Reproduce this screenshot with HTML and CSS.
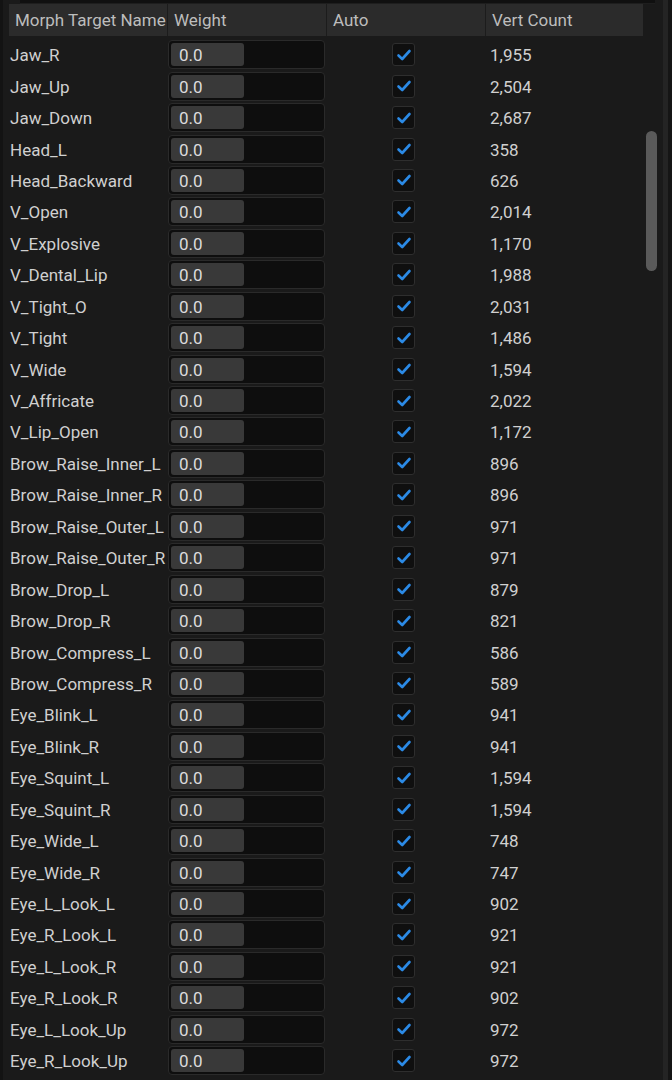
FILE: index.html
```html
<!DOCTYPE html>
<html lang="en">
<head>
  <meta charset="UTF-8" />
  <title>Morph Target Preview</title>
  <link rel="stylesheet" href="styles.css">
</head>
<body>
<div class="panel">
  <div class="gutter"></div>
  <div class="table">
    <div class="search-edge"></div>
    <div class="head">
      <div class="head-cell">Morph Target Name</div>
      <div class="head-cell">Weight</div>
      <div class="head-cell">Auto</div>
      <div class="head-cell">Vert Count</div>
    </div>
    <div class="rows" id="rows"></div>
  </div>
  <div class="scroll">
    <div class="thumb"></div>
  </div>
  <div class="track-line"></div>
  <div class="edge"></div>
</div>
<script>
  const targets = [
    ['Jaw_R', '1,955'], ['Jaw_Up', '2,504'], ['Jaw_Down', '2,687'], ['Head_L', '358'],
    ['Head_Backward', '626'], ['V_Open', '2,014'], ['V_Explosive', '1,170'], ['V_Dental_Lip', '1,988'],
    ['V_Tight_O', '2,031'], ['V_Tight', '1,486'], ['V_Wide', '1,594'], ['V_Affricate', '2,022'],
    ['V_Lip_Open', '1,172'], ['Brow_Raise_Inner_L', '896'], ['Brow_Raise_Inner_R', '896'],
    ['Brow_Raise_Outer_L', '971'], ['Brow_Raise_Outer_R', '971'], ['Brow_Drop_L', '879'],
    ['Brow_Drop_R', '821'], ['Brow_Compress_L', '586'], ['Brow_Compress_R', '589'],
    ['Eye_Blink_L', '941'], ['Eye_Blink_R', '941'], ['Eye_Squint_L', '1,594'], ['Eye_Squint_R', '1,594'],
    ['Eye_Wide_L', '748'], ['Eye_Wide_R', '747'], ['Eye_L_Look_L', '902'], ['Eye_R_Look_L', '921'],
    ['Eye_L_Look_R', '921'], ['Eye_R_Look_R', '902'], ['Eye_L_Look_Up', '972'], ['Eye_R_Look_Up', '972']
  ];

  const check = '<svg viewBox="0 0 16 16" width="16" height="16"><polyline points="2.5,8.5 6.2,12 13.5,4" fill="none" stroke="#2b8ae6" stroke-width="2.6" stroke-linecap="round" stroke-linejoin="round"/></svg>';

  const rows = document.getElementById('rows');
  rows.innerHTML = targets.map(([name, count]) => `
    <div class="row">
      <div class="name">${name}</div>
      <div class="weight"><div class="slider"><span class="fill">0.0</span></div></div>
      <div class="auto"><span class="checkbox">${check}</span></div>
      <div class="count">${count}</div>
    </div>`).join('');
</script>
</body>
</html>
```

FILE: styles.css
```css
html, body {
  margin: 0;
  padding: 0;
  height: 1080px;
  overflow: hidden;
  background: #1a1a1a;
  font-family: Roboto, 'Liberation Sans', sans-serif;
  font-size: 17px;
  color: #d0d0d0;
}
.panel {
  display: flex;
  height: 1080px;
}
.gutter {
  width: 9px;
  flex: none;
  background: linear-gradient(to right, #131313 0, #131313 3px, #1a1a1a 3px);
}
.table {
  width: 634px;
  flex: none;
}
.search-edge {
  height: 4px;
  margin-left: 11px;
  margin-right: -12px;
  background: #101010;
  border-bottom: 1px solid #1e1e1e;
  box-sizing: border-box;
}
.head {
  display: grid;
  grid-template-columns: 158px 158px 158px 157px;
  column-gap: 1px;
  background: #1c1c1c;
  height: 32px;
}
.head-cell {
  background: #2b2b2b;
  color: #bdbdbd;
  padding: 1px 4px 0 6px;
  line-height: 31px;
  white-space: nowrap;
  overflow: hidden;
}
.rows {
  padding-top: 3px;
}
.row {
  display: grid;
  grid-template-columns: 158px 158px 158px 157px;
  column-gap: 1px;
  height: 31.44px;
  align-items: center;
}
.name {
  padding: 1px 0 0 1px;
  white-space: nowrap;
  overflow: hidden;
}
.slider {
  width: 157px;
  height: 29px;
  box-sizing: border-box;
  padding: 2px;
  background: #0e0e0e;
  border: 1px solid #2a2a2a;
  border-radius: 4px;
}
.fill {
  display: block;
  width: 73px;
  height: 23px;
  line-height: 24px;
  box-sizing: border-box;
  padding-left: 8px;
  background: #393939;
  border-radius: 3px;
  color: #dcdcdc;
}
.auto {
  display: flex;
  justify-content: center;
  padding-right: 5px;
}
.checkbox {
  width: 23px;
  height: 23px;
  box-sizing: border-box;
  border: 1px solid #2e2e2e;
  border-radius: 3px;
  background: #0f0f0f;
  display: flex;
  align-items: center;
  justify-content: center;
}
.count {
  padding: 1px 0 0 4px;
}
.scroll {
  width: 20px;
  flex: none;
  padding-top: 131px;
}
.thumb {
  width: 11px;
  height: 140px;
  margin-left: 3px;
  background: #5a5a5a;
  border-radius: 6px;
}
.track-line {
  width: 5px;
  flex: none;
  background: #242424;
}
.edge {
  flex: 1;
  background: #151515;
}
```
